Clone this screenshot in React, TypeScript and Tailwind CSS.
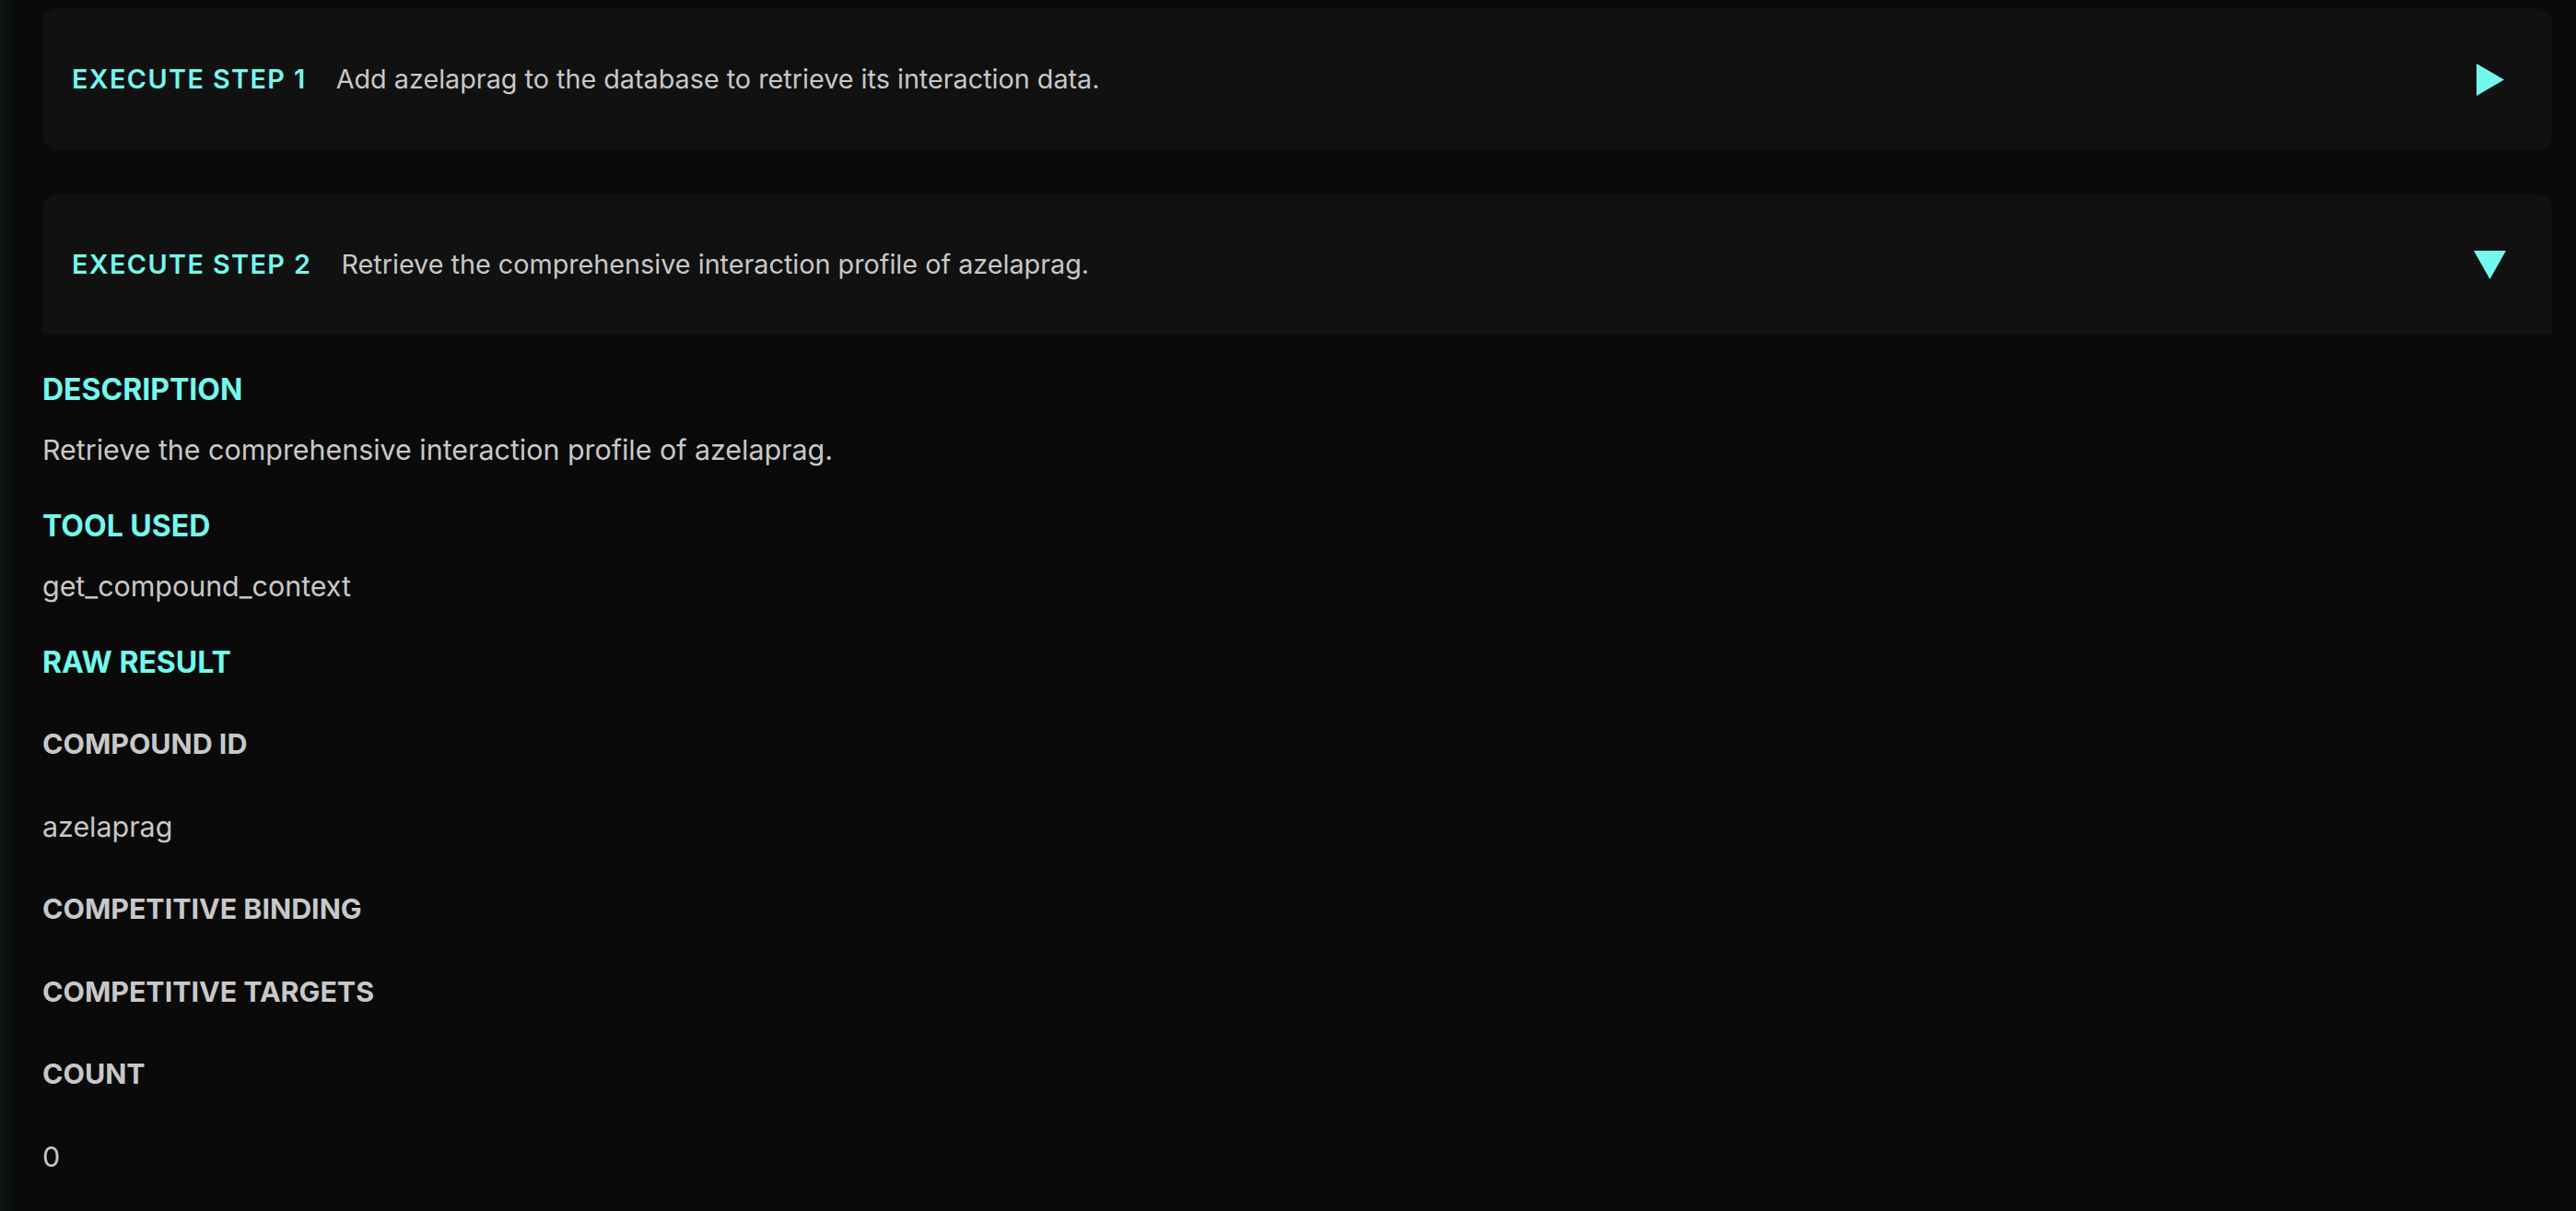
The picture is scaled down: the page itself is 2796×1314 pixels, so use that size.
const RAW_ROWS = [
  { text: 'COMPOUND ID', key: true },
  { text: 'azelaprag', key: false },
  { text: 'COMPETITIVE BINDING', key: true },
  { text: 'COMPETITIVE TARGETS', key: true },
  { text: 'COUNT', key: true },
  { text: '0', key: false },
]

function PlayIcon() {
  return (
    <svg width="35" height="35" viewBox="0 0 35 35">
      <polygon points="3,0 33,17.5 3,35" fill="#74f8ee" />
    </svg>
  )
}

function DownIcon() {
  return (
    <svg width="35" height="35" viewBox="0 0 35 35">
      <polygon points="0,2 35,2 17.5,33" fill="#74f8ee" />
    </svg>
  )
}

function StepHeader({ n, text, open }: { n: number; text: string; open?: boolean }) {
  return (
    <div
      className={
        open
          ? 'flex items-center justify-between h-[152px] bg-[#111111] rounded-t-2xl pl-8 pr-[50px]'
          : 'flex items-center justify-between h-[154px] bg-[#111111] rounded-2xl pl-8 pr-[50px]'
      }
    >
      <div className="flex items-center gap-8">
        <span className="text-[28.75px] font-semibold tracking-wider text-[#74f8ee]">
          EXECUTE STEP {n}
        </span>
        <span className="text-[28.75px] text-[#c8c8c8]">{text}</span>
      </div>
      {open ? <DownIcon /> : <PlayIcon />}
    </div>
  )
}

export default function App() {
  return (
    <div
      className="min-h-screen bg-[#0a0a0a] bg-[linear-gradient(to_right,#0f1616,#0a0a0a_16px)] pl-[46px] pr-[26px] pt-[9px]"
      style={{ fontFamily: 'Inter, "Noto Sans", sans-serif' }}
    >
      <StepHeader n={1} text="Add azelaprag to the database to retrieve its interaction data." />
      <div className="mt-12">
        <StepHeader n={2} text="Retrieve the comprehensive interaction profile of azelaprag." open />
      </div>

      <div className="flex flex-col">
        <h3 className="mt-[36px] text-[32px] leading-[48px] font-bold text-[#74f8ee]">DESCRIPTION</h3>
        <p className="mt-[19px] text-[30.4px] leading-[45px] text-[#c8c8c8]">
          Retrieve the comprehensive interaction profile of azelaprag.
        </p>
        <h3 className="mt-[36px] text-[32px] leading-[48px] font-bold text-[#74f8ee]">TOOL USED</h3>
        <p className="mt-[19px] text-[30.4px] leading-[45px] text-[#c8c8c8]">get_compound_context</p>
        <h3 className="mt-[36px] text-[32px] leading-[48px] font-bold text-[#74f8ee]">RAW RESULT</h3>

        <div className="mt-[42px] flex flex-col gap-[44.5px] pb-10">
          {RAW_ROWS.map((row, i) => (
            <div
              key={i}
              className={
                row.key
                  ? 'text-[30.4px] leading-[45px] font-bold text-[#c8c8c8]'
                  : 'text-[30.4px] leading-[45px] text-[#c8c8c8]'
              }
            >
              {row.text}
            </div>
          ))}
        </div>
      </div>
    </div>
  )
}
